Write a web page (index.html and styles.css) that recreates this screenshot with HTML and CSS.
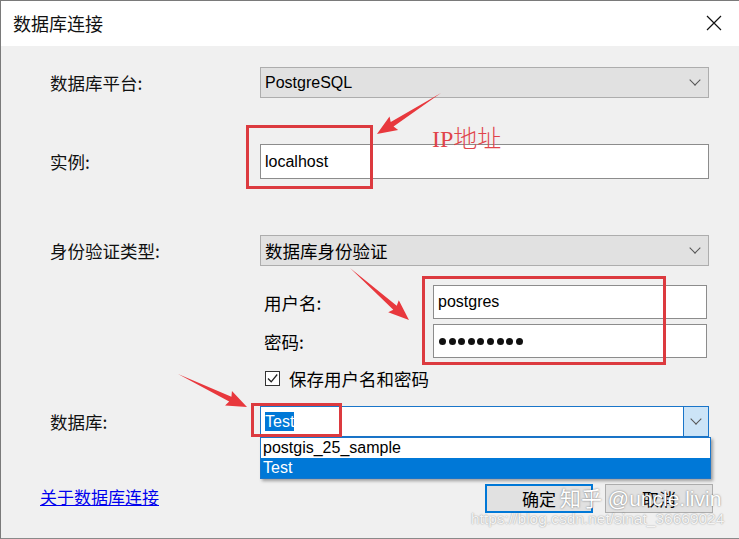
FILE: index.html
```html
<!DOCTYPE html>
<html lang="zh-CN">
<head>
    <meta charset="UTF-8">
    <title>数据库连接</title>
    <link rel="stylesheet" href="styles.css">
</head>
<body>
    <div class="window">
        <div class="titlebar">
            <span class="title">数据库连接</span>
            <svg class="close" width="16" height="16" viewBox="0 0 16 16">
                <path d="M1 1 L15 15 M15 1 L1 15" stroke="#111" stroke-width="1.2" fill="none"/>
            </svg>
        </div>

        <div class="content">
            <div class="row row-platform">
                <span class="label">数据库平台:</span>
                <div class="combo field">
                    <span class="combo-text latin">PostgreSQL</span>
                    <span class="chevron"></span>
                </div>
            </div>

            <div class="row row-instance">
                <span class="label">实例:</span>
                <div class="textbox field latin">localhost</div>
            </div>

            <div class="row row-auth">
                <span class="label">身份验证类型:</span>
                <div class="combo field">
                    <span class="combo-text">数据库身份验证</span>
                    <span class="chevron"></span>
                </div>
            </div>

            <div class="sub row-user">
                <span class="sub-label">用户名:</span>
                <div class="textbox small latin">postgres</div>
            </div>
            <div class="sub row-pass">
                <span class="sub-label">密码:</span>
                <div class="textbox small">
                    <div class="dots">
                        <i></i><i></i><i></i><i></i><i></i><i></i><i></i><i></i><i></i>
                    </div>
                </div>
            </div>

            <div class="check-row">
                <span class="checkbox">
                    <svg width="13" height="13" viewBox="0 0 13 13">
                        <path d="M2 6.5 L5.2 9.8 L11.2 2.5" stroke="#222" stroke-width="1.3" fill="none"/>
                    </svg>
                </span>
                <span>保存用户名和密码</span>
            </div>

            <div class="row row-db">
                <span class="label">数据库:</span>
                <div class="combo field focused">
                    <span class="combo-text latin"><span class="selected">Test</span></span>
                    <span class="drop-btn"><span class="chevron"></span></span>
                    <div class="droplist latin">
                        <div class="option">postgis_25_sample</div>
                        <div class="option active">Test</div>
                    </div>
                </div>
            </div>

            <div class="footer">
                <a class="about" href="#">关于数据库连接</a>
                <div class="buttons">
                    <button class="btn default">确定</button>
                    <button class="btn">取消</button>
                </div>
            </div>
        </div>

        <!-- red annotations drawn on top of the screenshot -->
        <svg class="annotations" width="739" height="539" viewBox="0 0 739 539">
            <g fill="none" stroke="#dc3a3f" stroke-width="3">
                <rect x="247.5" y="126.5" width="124" height="61"/>
                <rect x="423.5" y="277.5" width="241" height="86"/>
                <rect x="252.5" y="404.5" width="88" height="31"/>
            </g>
            <g fill="#e8383d">
                <polygon transform="translate(441 93) rotate(147.4)" points="0,0 58,-2.6 56,-8 76,0 56,8 58,2.6"/>
                <polygon transform="translate(350 268) rotate(41.4)" points="0,0 60,-2.6 58,-8 78.6,0 58,8 60,2.6"/>
                <polygon transform="translate(178 374) rotate(25.6)" points="0,0 58,-2.6 56,-8 76.5,0 56,8 58,2.6"/>
            </g>
        </svg>
        <span class="ip-note">IP地址</span>

        <span class="mark-zhihu">知乎 @uncle.livin</span>
        <span class="mark-url">https://blog.csdn.net/sinat_36669024</span>
    </div>
</body>
</html>
```

FILE: styles.css
```css
body {
    margin: 0;
    background-color: #f0f0f0;
    font-family: 'Noto Sans CJK SC', sans-serif;
    color: #000;
}
.window {
    position: relative;
    width: 739px;
    height: 539px;
    box-sizing: border-box;
    border-left: 1px solid #7a7a7a;
    border-top: 1px solid #7a7a7a;
    border-bottom: 1px solid #8a8a8a;
    background-color: #f0f0f0;
    overflow: hidden;
}
.titlebar {
    height: 45px;
    background-color: #ffffff;
    display: flex;
    align-items: center;
    justify-content: space-between;
    padding: 0 17px 0 12px;
}
.title {
    font-size: 18px;
    color: #111;
    margin-top: -2px;
}
.close {
    margin-top: -2px;
}
.latin {
    font-family: 'Liberation Sans', 'Noto Sans CJK SC', sans-serif;
}
.content {
    display: flex;
    flex-direction: column;
    padding-top: 21px;
    font-size: 17.5px;
}
.row {
    display: flex;
    align-items: center;
    padding-left: 49px;
}
.label {
    width: 210px;
    color: #111;
}
.field {
    width: 449px;
    box-sizing: border-box;
}
.row-instance {
    margin-top: 46px;
}
.row-auth {
    margin-top: 56px;
}
.combo {
    position: relative;
    height: 31px;
    background-color: #e1e1e1;
    border: 1px solid #adadad;
    display: flex;
    align-items: center;
    justify-content: space-between;
    padding: 0 9px 0 4px;
}
.combo-text {
    font-size: 16px;
    line-height: 20px;
}
.row-auth .combo-text {
    font-size: 17.5px;
}
.chevron {
    width: 7px;
    height: 7px;
    border-right: 1.5px solid #555;
    border-bottom: 1.5px solid #555;
    transform: rotate(45deg);
    margin-top: -5px;
}
.textbox {
    height: 35px;
    background-color: #ffffff;
    border: 1px solid #8c8c8c;
    box-sizing: border-box;
    display: flex;
    align-items: center;
    padding-left: 4px;
    font-size: 16px;
}
.sub {
    display: flex;
    align-items: center;
    padding-left: 263px;
}
.row-user {
    margin-top: 19px;
}
.row-pass {
    margin-top: 5px;
}
.sub-label {
    width: 169px;
}
.textbox.small {
    width: 274px;
    height: 34px;
}
.dots {
    display: flex;
    gap: 2.6px;
    padding-left: 1px;
}
.dots i {
    width: 7px;
    height: 7px;
    border-radius: 50%;
    background-color: #111;
}
.check-row {
    display: flex;
    align-items: center;
    gap: 9px;
    padding-left: 264px;
    margin-top: 10px;
    height: 20px;
}
.checkbox {
    width: 15px;
    height: 15px;
    box-sizing: border-box;
    border: 1px solid #333;
    background-color: #fff;
    display: flex;
    align-items: center;
    justify-content: center;
}
.row-db {
    margin-top: 18px;
}
.combo.focused {
    background-color: #ffffff;
    border-color: #1a75c9;
    padding-right: 0;
}
.selected {
    background-color: #0078d7;
    color: #ffffff;
    padding: 1px 0;
}
.drop-btn {
    width: 24px;
    height: 29px;
    background-color: #cce4f7;
    border-left: 1px solid #1a75c9;
    display: flex;
    align-items: center;
    justify-content: center;
}
.droplist {
    position: absolute;
    left: -1px;
    top: 30px;
    width: 449px;
    border: 1px solid #1a75c9;
    background-color: #ffffff;
    box-shadow: 2px 2px 3px rgba(0, 0, 0, 0.35);
    font-size: 16px;
}
.option {
    height: 20px;
    line-height: 20px;
    padding-left: 2px;
}
.option.active {
    background-color: #0078d7;
    color: #ffffff;
}
.footer {
    display: flex;
    align-items: center;
    justify-content: space-between;
    margin-top: 47px;
    padding: 0 26px 0 39px;
}
.about {
    color: #0000ee;
    font-size: 17px;
    margin-top: -5px;
}
.buttons {
    display: flex;
    gap: 12px;
}
.btn {
    width: 108px;
    height: 29px;
    background-color: #e1e1e1;
    border: 1px solid #adadad;
    font-family: 'Noto Sans CJK SC', sans-serif;
    font-size: 17px;
    padding: 0;
}
.btn.default {
    border: 2px solid #0078d7;
}
.annotations {
    position: absolute;
    left: -1px;
    top: -1px;
}
.ip-note {
    position: absolute;
    left: 431px;
    top: 118px;
    font-family: 'Liberation Serif', 'Noto Sans CJK SC', serif;
    font-size: 24px;
    font-weight: 300;
    color: #e0444a;
}
.mark-zhihu {
    position: absolute;
    left: 559px;
    top: 481px;
    white-space: nowrap;
    font-family: 'Liberation Sans', 'Noto Sans CJK SC', sans-serif;
    font-size: 21px;
    color: #ffffff;
    text-shadow: 0 0 2px rgba(0, 0, 0, 0.55);
}
.mark-url {
    position: absolute;
    left: 470px;
    top: 509px;
    white-space: nowrap;
    font-family: 'Liberation Sans', sans-serif;
    font-size: 15.5px;
    color: #f4f4f4;
    text-shadow: 0 0 1.5px rgba(0, 0, 0, 0.45);
}
```
